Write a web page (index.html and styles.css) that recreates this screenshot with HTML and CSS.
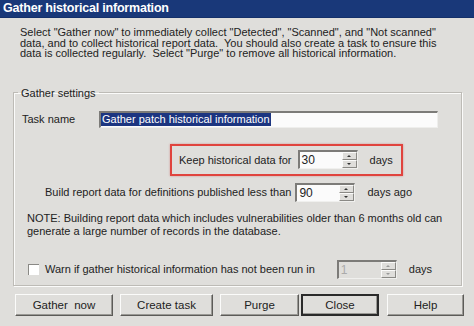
FILE: index.html
```html
<!DOCTYPE html>
<html lang="en">
<head>
	<meta charset="utf-8" />
	<title>Gather historical information</title>
	<link rel="stylesheet" href="styles.css">
</head>
<body>
	<div class="dialog">
		<div class="titlebar">Gather historical information</div>
		<p class="intro">
			Select "Gather now" to immediately collect "Detected", "Scanned", and "Not scanned"<br/>
			data, and to collect historical report data.&nbsp; You should also create a task to ensure this<br/>
			data is collected regularly.&nbsp; Select "Purge" to remove all historical information.
		</p>
		<fieldset class="group">
			<legend>Gather settings</legend>
			<div class="row task">
				<label>Task name</label>
				<div class="textbox"><span class="sel">Gather patch historical information</span></div>
			</div>
			<div class="highlight">
				<label>Keep historical data for</label>
				<div class="spin"><span class="val">30</span><span class="arrows"><i class="up"></i><i class="down"></i></span></div>
				<span class="unit">days</span>
			</div>
			<div class="row build">
				<label>Build report data for definitions published less than</label>
				<div class="spin"><span class="val">90</span><span class="arrows"><i class="up"></i><i class="down"></i></span></div>
				<span class="unit">days ago</span>
			</div>
			<p class="note">
				NOTE: Building report data which includes vulnerabilities older than 6 months old can<br/>
				generate a large number of records in the database.
			</p>
			<div class="row warn">
				<span class="check"></span>
				<label>Warn if gather historical information has not been run in</label>
				<div class="spin disabled"><span class="val">1</span><span class="arrows"><i class="up"></i><i class="down"></i></span></div>
				<span class="unit">days</span>
			</div>
		</fieldset>
		<div class="buttons">
			<button class="b-gather">Gather&nbsp; now</button>
			<button class="b-task">Create task</button>
			<button class="b-purge">Purge</button>
			<button class="b-close default">Close</button>
			<button class="b-help">Help</button>
		</div>
	</div>
</body>
</html>
```

FILE: styles.css
```css
html, body {
	margin: 0;
	height: 100%;
	overflow: hidden;
}
body {
	font-family: "Liberation Sans", Arial, sans-serif;
	font-size: 11px;
	color: #222;
	background: #dfdedb;
}
.dialog {
	height: 100%;
}
.titlebar {
	height: 17px;
	line-height: 17px;
	padding-left: 3px;
	background: #193879;
	color: #fff;
	font-weight: bold;
	font-size: 12.5px;
	letter-spacing: -0.2px;
	border-bottom: 1px solid #14306a;
}
.intro {
	margin: 9px 0 0 20px;
	line-height: 10.5px;
}
.group {
	margin: 28px 12px 0 13px;
	padding: 12px 0 0 8px;
	height: 199px;
	box-sizing: border-box;
	border: 1px solid #bdbbb6;
	box-shadow: 1px 1px 0 #fbfbfa, inset 1px 1px 0 #fbfbfa;
}
.group legend {
	padding: 0 3px;
	margin-left: -4px;
}
.row {
	display: flex;
	align-items: center;
}
.task label {
	width: 77px;
}
.textbox {
	width: 336px;
	height: 14px;
	background: #fbfbfb;
	border-top: 2px solid #7c7b78;
	border-left: 2px solid #7c7b78;
	border-right: 1px solid #eeeeec;
	border-bottom: 1px solid #eeeeec;
	display: flex;
	align-items: center;
}
.sel {
	background: #1c3580;
	color: #fff;
	padding: 0 1px;
	line-height: 13px;
}
.highlight {
	display: flex;
	align-items: center;
	width: 233px;
	height: 32px;
	box-sizing: border-box;
	margin: 16px 0 0 148px;
	padding-left: 7px;
	border: 2px solid #e0443e;
	box-shadow: 0 0 2px rgba(200, 40, 40, .4);
}
.highlight label {
	margin-right: 6px;
}
.spin {
	display: flex;
	width: 60px;
	height: 19px;
	box-sizing: border-box;
	background: #fbfbfb;
	border-top: 2px solid #7c7b78;
	border-left: 2px solid #7c7b78;
	border-right: 1px solid #f0f0ee;
	border-bottom: 1px solid #f0f0ee;
}
.spin .val {
	flex: 1;
	padding: 1px 0 0 2px;
	font-size: 12px;
}
.arrows {
	width: 15px;
	display: flex;
	flex-direction: column;
	background: #dfdedb;
}
.arrows i {
	flex: 1;
	position: relative;
	border-top: 1px solid #fbfbfa;
	border-left: 1px solid #fbfbfa;
	border-right: 1px solid #8a8985;
	border-bottom: 1px solid #8a8985;
}
.arrows i::after {
	content: "";
	position: absolute;
	left: 4px;
	top: 2px;
	border-left: 2.5px solid transparent;
	border-right: 2.5px solid transparent;
}
.arrows .up::after {
	border-bottom: 2px solid #333;
}
.arrows .down::after {
	border-top: 2px solid #333;
}
.unit {
	margin-left: 12px;
}
.build {
	margin: 7px 0 0 23px;
}
.build label {
	margin-right: 4px;
}
.note {
	margin: 10px 0 0 5px;
	line-height: 13px;
}
.warn {
	margin: 22px 0 0 6px;
}
.check {
	width: 11px;
	height: 11px;
	box-sizing: border-box;
	background: #fff;
	border-top: 1px solid #8a8985;
	border-left: 1px solid #8a8985;
	margin-right: 6px;
}
.warn label {
	margin-right: 22px;
}
.spin.disabled {
	background: #dfdedb;
	color: #aaa;
}
.spin.disabled .arrows .up::after {
	border-bottom-color: #999;
}
.spin.disabled .arrows .down::after {
	border-top-color: #999;
}
.buttons {
	display: flex;
	margin: 8px 0 0 15px;
	gap: 7px;
}
.buttons button {
	font: inherit;
	font-size: 11.5px;
	color: #222;
	height: 22px;
	padding: 0;
	background: #dfdedb;
	border: 1px solid;
	border-color: #fbfbfa #5c5b58 #5c5b58 #fbfbfa;
	box-shadow: inset -1px -1px 0 #9a9995;
}
.b-gather { width: 98px; }
.b-task { width: 93px; }
.b-purge { width: 79px; }
.b-close { width: 78px; margin-left: -5px; }
.b-help { width: 77px; margin-left: 1px; }
.buttons .default {
	border: 2px solid #2a2a2a;
}
```
